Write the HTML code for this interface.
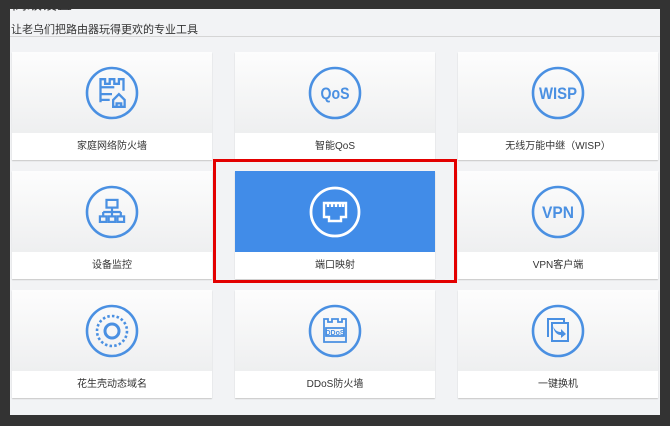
<!DOCTYPE html>
<html><head><meta charset="utf-8"><style>
*{margin:0;padding:0;box-sizing:border-box}
body{width:670px;height:426px;background:#333;position:relative;overflow:hidden;font-family:"Liberation Sans","Noto Sans CJK SC",sans-serif}
#main{position:absolute;left:10px;top:9px;width:650px;height:406px;background:#f2f3f5;overflow:hidden}
.t1{position:absolute;left:2px;top:-16px;font-size:15px;color:#333}
.t2{position:absolute;left:1px;top:12px;font-size:11px;color:#333}
.ln{position:absolute;left:0;top:27px;width:650px;height:1px;background:#d5d5d5}
.card{position:absolute;width:200px;height:108px;background:#fff;box-shadow:0 1px 1px #c8c8c8}
.ic{position:absolute;left:0;top:0;width:200px;height:81px;background:linear-gradient(#fdfdfd,#eeeff0)}
.lb{position:absolute;left:0;top:81px;width:200px;height:27px;line-height:27px;text-align:center;font-size:10px;color:#333}
.ic svg{position:absolute;left:73px;top:14px}
.act .ic{background:#418ce8}
#red{position:absolute;left:213px;top:159px;width:244px;height:124px;border:3px solid #e30000}
.ctxt{font-family:"Liberation Sans Narrow","Liberation Sans",sans-serif;font-weight:bold;fill:#4a90e2}
</style></head><body>
<div id="main">
<div class="t1">高级设置</div>
<div class="t2">让老乌们把路由器玩得更欢的专业工具</div>
<div class="ln"></div>
</div>
<!-- row1 -->
<div class="card" style="left:12px;top:52px"><div class="ic"><svg width="54" height="54" viewBox="0 0 54 54"><circle cx="27" cy="27" r="25" fill="none" stroke="#4a90e2" stroke-width="2.6"/><g fill="none" stroke="#4a90e2" stroke-width="2" transform="translate(27 27) scale(1.15) translate(-27 -27)"><path d="M17 35V15h4v4h4v-4h4v4h4v-4h4v10"/><path d="M17 22h12M17 28h10M17 33h8"/><path d="M28 33l5-5 5 5v6h-10z"/><path d="M31 39v-3h4v3"/></g></svg></div><div class="lb">家庭网络防火墙</div></div>
<div class="card" style="left:235px;top:52px"><div class="ic"><svg width="54" height="54" viewBox="0 0 54 54"><circle cx="27" cy="27" r="25" fill="none" stroke="#4a90e2" stroke-width="2.6"/><text class="ctxt" x="27" y="33" text-anchor="middle" font-size="17" textLength="29" lengthAdjust="spacingAndGlyphs">QoS</text></svg></div><div class="lb">智能QoS</div></div>
<div class="card" style="left:458px;top:52px"><div class="ic"><svg width="54" height="54" viewBox="0 0 54 54"><circle cx="27" cy="27" r="25" fill="none" stroke="#4a90e2" stroke-width="2.6"/><text class="ctxt" x="27" y="33" text-anchor="middle" font-size="17" textLength="38" lengthAdjust="spacingAndGlyphs">WISP</text></svg></div><div class="lb">无线万能中继（WISP）</div></div>
<!-- row2 -->
<div class="card" style="left:12px;top:171px"><div class="ic"><svg width="54" height="54" viewBox="0 0 54 54"><circle cx="27" cy="27" r="25" fill="none" stroke="#4a90e2" stroke-width="2.6"/><g fill="none" stroke="#4a90e2" stroke-width="2" transform="translate(27 27) scale(1.1) translate(-27 -27)"><rect x="22" y="16" width="10" height="7"/><path d="M27 23v4M19 27h16M19 27v4M27 27v4M35 27v4"/><rect x="16" y="31" width="6" height="5"/><rect x="24" y="31" width="6" height="5"/><rect x="32" y="31" width="6" height="5"/></g></svg></div><div class="lb">设备监控</div></div>
<div class="card act" style="left:235px;top:171px"><div class="ic"><svg width="54" height="54" viewBox="0 0 54 54"><circle cx="27" cy="27" r="24" fill="none" stroke="#fff" stroke-width="2.8"/><g fill="none" stroke="#fff" stroke-width="2.4"><path d="M16 18h22v14h-5v4h-12v-4h-5z"/><path d="M20 19v3M24 19v3M28 19v3M32 19v3M35 19v3"/></g></svg></div><div class="lb">端口映射</div></div>
<div class="card" style="left:458px;top:171px"><div class="ic"><svg width="54" height="54" viewBox="0 0 54 54"><circle cx="27" cy="27" r="25" fill="none" stroke="#4a90e2" stroke-width="2.6"/><text class="ctxt" x="27" y="33" text-anchor="middle" font-size="17" textLength="32" lengthAdjust="spacingAndGlyphs">VPN</text></svg></div><div class="lb">VPN客户端</div></div>
<!-- row3 -->
<div class="card" style="left:12px;top:290px"><div class="ic"><svg width="54" height="54" viewBox="0 0 54 54"><circle cx="27" cy="27" r="25" fill="none" stroke="#4a90e2" stroke-width="2.6"/><circle cx="27" cy="27" r="15" fill="none" stroke="#4a90e2" stroke-width="2.6" stroke-dasharray="2.5 2.2"/><circle cx="27" cy="27" r="7" fill="none" stroke="#4a90e2" stroke-width="3"/></svg></div><div class="lb">花生壳动态域名</div></div>
<div class="card" style="left:235px;top:290px"><div class="ic"><svg width="54" height="54" viewBox="0 0 54 54"><circle cx="27" cy="27" r="25" fill="none" stroke="#4a90e2" stroke-width="2.6"/><g fill="none" stroke="#4a90e2" stroke-width="1.8"><path d="M16 38V15h4v3h4v-3h6v3h4v-3h4v23z"/><rect x="18" y="24" width="18" height="8"/></g><text x="27" y="31" text-anchor="middle" font-family="Liberation Sans" font-weight="bold" font-size="7" fill="#4a90e2">DDoS</text></svg></div><div class="lb">DDoS防火墙</div></div>
<div class="card" style="left:458px;top:290px"><div class="ic"><svg width="54" height="54" viewBox="0 0 54 54"><circle cx="27" cy="27" r="25" fill="none" stroke="#4a90e2" stroke-width="2.6"/><g fill="none" stroke="#4a90e2" stroke-width="2"><path d="M17 33V15h16v3"/><rect x="21" y="19" width="16" height="18"/></g><path d="M22 22c2 5 5 6 8 6v-3l5 5-5 4v-3c-4 0-7-3-8-9z" fill="#4a90e2"/></svg></div><div class="lb">一键换机</div></div>
<div id="red"></div>
</body></html>
